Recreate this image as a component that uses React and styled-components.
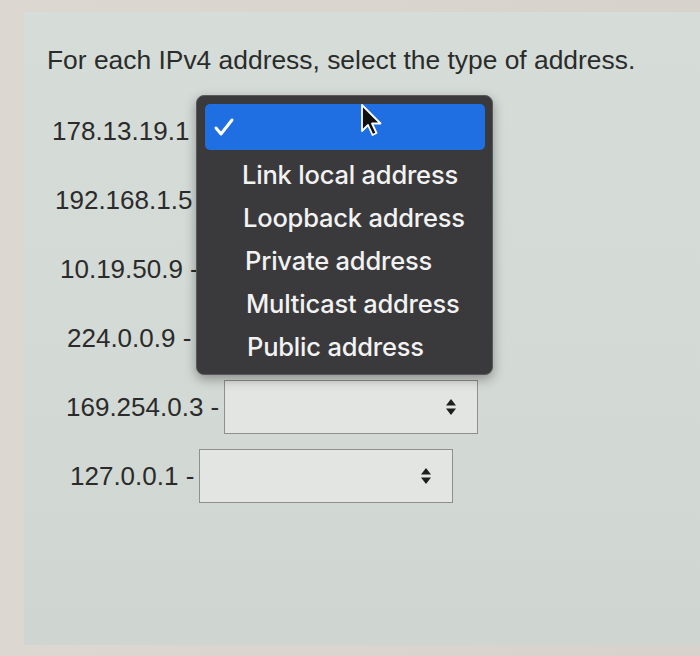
import React from 'react';
import styled, { createGlobalStyle } from 'styled-components';

const Global = createGlobalStyle`
  html, body { margin: 0; padding: 0; }
  body {
    width: 700px; height: 656px; overflow: hidden;
    background: #dbd5d0;
    font-family: "Liberation Sans", Arial, sans-serif;
  }
`;

const Page = styled.div`
  width: 700px;
  height: 656px;
  box-sizing: border-box;
  padding: 12px 0 11px 24px;
  background: linear-gradient(90deg, #ddd7d2 0%, #d8d2cd 100%);
`;

const Panel = styled.div`
  position: relative;
  height: 100%;
  box-sizing: border-box;
  background: linear-gradient(180deg, #d6ddd9 0%, #d3d9d5 60%, #cfd5d1 100%);
  padding: 30px 0 0 23px;
`;

const Title = styled.h1`
  margin: 0;
  font-size: 26.4px;
  line-height: 36px;
  font-weight: 400;
  color: #2a2c2b;
`;

const Rows = styled.div`
  margin-top: 26px;
  display: flex;
  flex-direction: column;
  gap: 15px;
`;

const Row = styled.div`
  display: flex;
  align-items: center;
  height: 54px;
  padding-left: ${p => p.$indent}px;
`;

const Label = styled.span`
  font-size: 26px;
  color: #2b2b2b;
  white-space: pre;
`;

const SelectBox = styled.div`
  margin-left: 5px;
  width: 254px;
  height: 54px;
  box-sizing: border-box;
  border: 1.5px solid #8d908e;
  background: #e3e5e2;
  display: flex;
  align-items: center;
  justify-content: flex-end;
  padding-right: 20px;
`;

const Menu = styled.div`
  position: absolute;
  left: 172px;
  top: 83px;
  width: 297px;
  height: 280px;
  box-sizing: border-box;
  background: #3a3a3c;
  border: 1px solid #5a5a5c;
  border-radius: 8px;
  box-shadow: 0 4px 12px rgba(0,0,0,0.35);
  padding: 8px 7px 6px 8px;
  font-family: Inter, "Liberation Sans", sans-serif;
`;

const Highlight = styled.div`
  position: relative;
  height: 46px;
  border-radius: 5px;
  background: #1f6fe2;
  display: flex;
  align-items: center;
  padding-left: 8px;
  margin-bottom: 3px;
`;

const Item = styled.div`
  height: 43px;
  display: flex;
  align-items: center;
  padding-left: ${p => 37 + p.$indent}px;
  font-size: 25.5px;
  font-weight: 500;
  color: #f2f2f2;
  letter-spacing: -0.2px;
`;

const Cursor = styled.svg`
  position: absolute;
  left: 155px;
  top: 0px;
`;

const Stepper = () => (
  <svg width="12" height="18" viewBox="0 0 12 18">
    <path d="M6 1 L11 7.5 H1 Z" fill="#1e1e1e" />
    <path d="M6 17 L11 10.5 H1 Z" fill="#1e1e1e" />
  </svg>
);

const rows = [
  { ip: '178.13.19.1', indent: 5 },
  { ip: '192.168.1.5', indent: 8 },
  { ip: '10.19.50.9', indent: 13 },
  { ip: '224.0.0.9', indent: 20 },
  { ip: '169.254.0.3', indent: 19 },
  { ip: '127.0.0.1', indent: 23 },
];

const options = [
  { t: 'Link local address', i: 0 },
  { t: 'Loopback address', i: 1 },
  { t: 'Private address', i: 3 },
  { t: 'Multicast address', i: 4 },
  { t: 'Public address', i: 5 },
];

export default function App() {
  return (
    <>
      <Global />
      <Page>
        <Panel>
          <Title>For each IPv4 address, select the type of address.</Title>
          <Rows>
            {rows.map(r => (
              <Row key={r.ip} $indent={r.indent}>
                <Label>{r.ip} -</Label>
                <SelectBox>
                  <Stepper />
                </SelectBox>
              </Row>
            ))}
          </Rows>
          <Menu>
            <Highlight>
              <svg width="22" height="20" viewBox="0 0 22 20">
                <path d="M3 11 L8 17 L19 3" fill="none" stroke="#ffffff" strokeWidth="3" strokeLinecap="round" strokeLinejoin="round" />
              </svg>
              <Cursor width="24" height="36" viewBox="0 0 24 36">
                <path d="M2 1 L2 27 L8 21 L12.5 31 L16.5 29 L12 19.5 L20.5 19.5 Z" fill="#111" stroke="#fff" strokeWidth="1.8" strokeLinejoin="round" />
              </Cursor>
            </Highlight>
            {options.map(o => (
              <Item key={o.t} $indent={o.i}>{o.t}</Item>
            ))}
          </Menu>
        </Panel>
      </Page>
    </>
  );
}
